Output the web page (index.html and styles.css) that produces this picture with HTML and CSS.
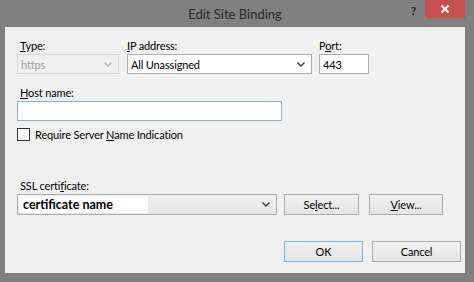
FILE: index.html
```html
<!DOCTYPE html>
<html lang="en">
<head>
    <meta charset="UTF-8">
    <title>Edit Site Binding</title>
    <link rel="stylesheet" href="styles.css">
</head>
<body>
    <div class="window">
        <div class="titlebar">
            <div class="title">Edit Site Binding</div>
            <div class="controls">
                <span class="help">?</span>
                <span class="close">
                    <svg width="10" height="10" viewBox="0 0 10 10"><path d="M1.5 1.5 L8.5 8.5 M8.5 1.5 L1.5 8.5" stroke="#fff" stroke-width="2" fill="none"/></svg>
                </span>
            </div>
        </div>

        <div class="client">
            <!-- Type / IP / Port -->
            <div class="row-top">
                <div class="field type-field">
                    <div class="label"><span class="u">T</span>ype:</div>
                    <div class="combo disabled">
                        <span>https</span>
                        <svg class="chev" width="8" height="5" viewBox="0 0 8 5"><path d="M0.5 0.5 L4 4 L7.5 0.5" stroke="#b8b8b8" stroke-width="1.3" fill="none"/></svg>
                    </div>
                </div>
                <div class="field ip-field">
                    <div class="label flush"><span class="u">I</span>P address:</div>
                    <div class="combo">
                        <span>All Unassigned</span>
                        <svg class="chev" width="8" height="5" viewBox="0 0 8 5"><path d="M0.5 0.5 L4 4 L7.5 0.5" stroke="#333" stroke-width="1.3" fill="none"/></svg>
                    </div>
                </div>
                <div class="field port-field">
                    <div class="label flush">P<span class="u">o</span>rt:</div>
                    <div class="textbox">443</div>
                </div>
            </div>

            <!-- Host name -->
            <div class="label host-label"><span class="u">H</span>ost name:</div>
            <div class="textbox focused host-box"></div>

            <label class="check-row">
                <span class="checkbox"></span>
                <span>Require Server <span class="u">N</span>ame Indication</span>
            </label>

            <!-- SSL certificate -->
            <div class="label ssl-label">SSL certi<span class="u">f</span>icate:</div>
            <div class="ssl-row">
                <div class="combo cert-combo">
                    <span class="cert-name">certificate name</span>
                    <svg class="chev" width="8" height="5" viewBox="0 0 8 5"><path d="M0.5 0.5 L4 4 L7.5 0.5" stroke="#333" stroke-width="1.3" fill="none"/></svg>
                </div>
                <button class="btn select-btn">Se<span class="u">l</span>ect...</button>
                <button class="btn view-btn"><span class="u">V</span>iew...</button>
            </div>

            <div class="footer">
                <button class="btn ok-btn">OK</button>
                <button class="btn cancel-btn">Cancel</button>
            </div>
        </div>
    </div>
</body>
</html>
```

FILE: styles.css
```css
body {
    margin: 0;
    background-color: #808080;
    font-family: Lato, "Noto Sans", sans-serif;
    font-size: 11px;
    letter-spacing: -0.15px;
    color: #000;
    overflow: hidden;
}

.window {
    width: 474px;
    height: 282px;
    background-color: #808080;
}

.titlebar {
    height: 27px;
    display: grid;
}

.title,
.controls {
    grid-area: 1 / 1;
}

.title {
    justify-self: center;
    margin-left: -4px;
    line-height: 28px;
    font-size: 13px;
    letter-spacing: 0;
    color: #2a2a2a;
}

.controls {
    justify-self: end;
    display: flex;
    align-items: flex-start;
    margin-right: 9px;
}

.help {
    font-weight: bold;
    font-size: 12px;
    color: #222;
    margin-top: 3px;
    margin-right: 9px;
}

.close {
    width: 40px;
    height: 18px;
    background-color: #c7504f;
    display: flex;
    align-items: center;
    justify-content: center;
}

.client {
    margin-left: 5px;
    width: 460px;
    height: 236px;
    padding-top: 10px;
    background-color: #f0f0f0;
    box-sizing: content-box;
}

.label {
    height: 17px;
    line-height: 17px;
    padding-left: 3px;
    white-space: nowrap;
}

.label.flush {
    padding-left: 0;
}

.u {
    text-decoration: underline;
}

.row-top {
    display: flex;
    padding-left: 12px;
}

.type-field { width: 102px; margin-right: 8px; }
.ip-field { width: 185px; margin-right: 7px; }
.port-field { width: 50px; }

.combo,
.textbox {
    box-sizing: border-box;
    height: 20px;
    border: 1px solid #acacac;
    background-color: #fff;
    display: flex;
    align-items: center;
    padding-left: 3px;
    white-space: nowrap;
}

.combo span {
    flex: 1;
}

.chev {
    margin-right: 6px;
}

.combo.disabled {
    background-color: #f0f0f0;
    border-color: #d9d9d9;
    color: #a0a0a0;
}

.host-label {
    margin-top: 10px;
    margin-left: 12px;
}

.host-box {
    margin-left: 12px;
    width: 265px;
}

.textbox.focused {
    border-color: #7eb4ea;
}

.check-row {
    display: flex;
    align-items: center;
    margin-top: 7px;
    margin-left: 12px;
    height: 13px;
}

.checkbox {
    box-sizing: border-box;
    width: 13px;
    height: 13px;
    border: 1px solid #333;
    background-color: #fff;
    margin-right: 5px;
}

.ssl-label {
    margin-top: 37px;
    margin-left: 12px;
    height: 16px;
    line-height: 16px;
}

.ssl-row {
    display: flex;
    padding-left: 12px;
}

.cert-combo {
    width: 260px;
    height: 21px;
    padding-left: 1px;
    background: linear-gradient(#f0f0f0, #e5e5e5);
}

.cert-combo .cert-name {
    flex: 0 0 auto;
    width: 125px;
    height: 17px;
    line-height: 17px;
    padding-left: 4px;
    margin-right: auto;
    background-color: #fff;
    font-weight: bold;
    font-size: 12.5px;
    letter-spacing: 0;
}

.btn {
    box-sizing: border-box;
    height: 21px;
    border: 1px solid #acacac;
    background: linear-gradient(#f0f0f0, #e5e5e5);
    font-family: inherit;
    font-size: 11px;
    letter-spacing: -0.15px;
    color: #000;
    padding: 0;
}

.select-btn { width: 75px; margin-left: 7px; }
.view-btn { width: 74px; margin-left: 10px; }

.footer {
    display: flex;
    margin-top: 26px;
    padding-left: 279px;
}

.ok-btn {
    width: 79px;
    border-color: #7eb4ea;
}

.cancel-btn {
    width: 89px;
    margin-left: 9px;
}
```
